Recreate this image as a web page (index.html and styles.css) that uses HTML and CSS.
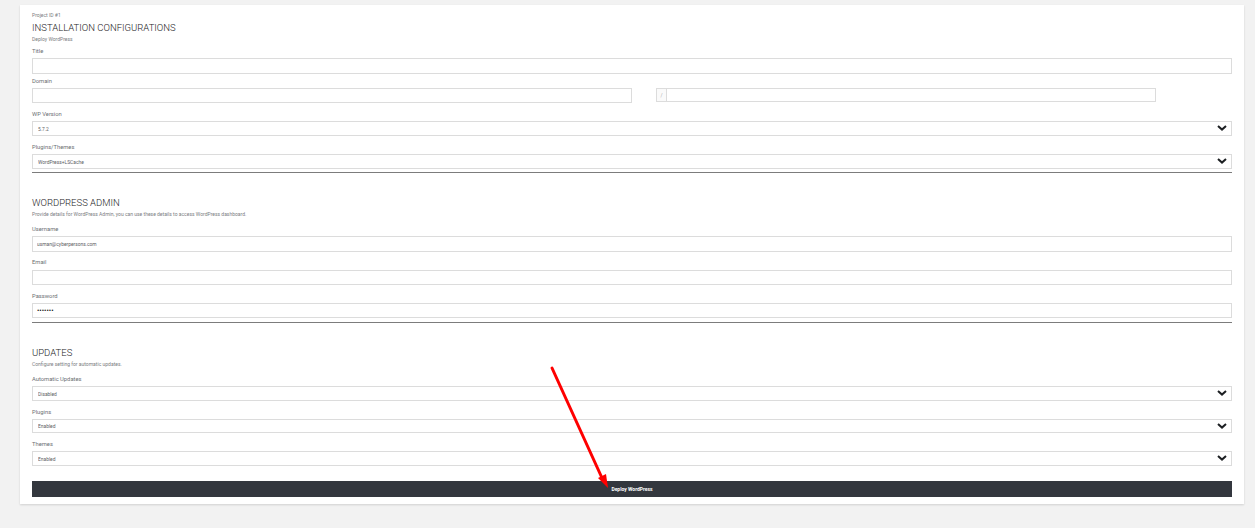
FILE: index.html
```html
<!DOCTYPE html>
<html lang="en">
<head>
<meta charset="utf-8">
<title>Deploy WordPress</title>
<link rel="stylesheet" href="styles.css">
</head>
<body>
<main class="card">
  <section class="section first">
    <p class="small project">Project ID #1</p>
    <h2 class="heading h-install">INSTALLATION CONFIGURATIONS</h2>
    <p class="small sub">Deploy WordPress</p>
    <label class="label l-title">Title</label>
    <input class="field f-title" type="text">
    <label class="label l-domain">Domain</label>
    <div class="domain-row">
      <input class="field f-domain" type="text">
      <div class="path-group">
        <span class="addon">/</span>
        <input class="field f-path" type="text">
      </div>
    </div>
    <label class="label l-select">WP Version</label>
    <div class="select-wrap">
      <select class="field select"><option>5.7.2</option></select>
      <svg class="chev" width="10" height="6" viewBox="0 0 10 6" aria-hidden="true"><path d="M1 1 L5 4.6 L9 1" fill="none" stroke="#1c1f22" stroke-width="2"/></svg>
    </div>
    <label class="label l-select">Plugins/Themes</label>
    <div class="select-wrap">
      <select class="field select"><option>WordPress+LSCache</option></select>
      <svg class="chev" width="10" height="6" viewBox="0 0 10 6" aria-hidden="true"><path d="M1 1 L5 4.6 L9 1" fill="none" stroke="#1c1f22" stroke-width="2"/></svg>
    </div>
    <hr class="rule">
  </section>
  <section class="section">
    <h2 class="heading">WORDPRESS ADMIN</h2>
    <p class="small sub2">Provide details for WordPress Admin, you can use these details to access WordPress dashboard.</p>
    <label class="label l-user">Username</label>
    <input class="field f-user" type="text" value="usman@cyberpersons.com">
    <label class="label l-email">Email</label>
    <input class="field f-email" type="text">
    <label class="label l-pass">Password</label>
    <input class="field f-pass" type="password" value="1234567">
    <hr class="rule rule2">
  </section>
  <section class="section">
    <h2 class="heading">UPDATES</h2>
    <p class="small sub2">Configure setting for automatic updates.</p>
    <label class="label l-user">Automatic Updates</label>
    <div class="select-wrap">
      <select class="field select"><option>Disabled</option></select>
      <svg class="chev" width="10" height="6" viewBox="0 0 10 6" aria-hidden="true"><path d="M1 1 L5 4.6 L9 1" fill="none" stroke="#1c1f22" stroke-width="2"/></svg>
    </div>
    <label class="label l-select">Plugins</label>
    <div class="select-wrap">
      <select class="field select short"><option>Enabled</option></select>
      <svg class="chev" width="10" height="6" viewBox="0 0 10 6" aria-hidden="true"><path d="M1 1 L5 4.6 L9 1" fill="none" stroke="#1c1f22" stroke-width="2"/></svg>
    </div>
    <label class="label l-select">Themes</label>
    <div class="select-wrap">
      <select class="field select"><option>Enabled</option></select>
      <svg class="chev" width="10" height="6" viewBox="0 0 10 6" aria-hidden="true"><path d="M1 1 L5 4.6 L9 1" fill="none" stroke="#1c1f22" stroke-width="2"/></svg>
    </div>
  </section>
  <button class="deploy" type="button">Deploy WordPress</button>
  <svg class="arrow" width="70" height="130" viewBox="0 0 70 130" aria-hidden="true">
    <path d="M2 1 L52 111" stroke="#fe0000" stroke-width="3" stroke-linecap="round" fill="none"/>
    <path d="M58 121 L48 111 L56 107 Z" fill="#fe0000"/>
  </svg>
</main>
</body>
</html>
```
FILE: styles.css
```css
* { box-sizing: border-box; }
html, body { margin: 0; height: 528px; overflow: hidden; }
body {
  background: #f2f2f2;
  padding: 5px 11px 0 20px;
  font-family: Roboto, "Liberation Sans", sans-serif;
  color: #3e4247;
}
.card {
  position: relative;
  background: #fff;
  height: 499px;
  padding: 0 12px;
  box-shadow: 0 1px 2px rgba(0,0,0,.14);
}
.section { display: flex; flex-direction: column; }
.small { margin: 0; font-size: 5px; line-height: 8px; color: #7b7e82; }
.project { margin-top: 6px; }
.heading {
  margin: 0;
  height: 14px;
  font-size: 9.5px;
  line-height: 14px;
  font-weight: 300;
  color: #1d2125;
}
.h-install { margin-top: 2px; }
.section:not(.first) .heading { margin-top: 23px; height: 14px; line-height: 14px; }
.sub { margin-top: 0; }
.sub2 { margin-top: 0; }
.label { font-size: 5.8px; line-height: 8px; color: #6c6f73; display: block; }
.l-title { margin-top: 4px; margin-bottom: 3px; }
.l-domain { margin-top: 3px; margin-bottom: 3px; }
.l-select { margin-top: 7px; margin-bottom: 3px; }
.l-user { margin-top: 7px; margin-bottom: 3px; }
.l-email { margin-top: 6px; margin-bottom: 4px; }
.l-pass { margin-top: 7px; margin-bottom: 3px; }
.field {
  display: block;
  width: 100%;
  height: 16px;
  margin: 0;
  padding: 0 4px;
  border: 1px solid #dcdcdc;
  border-radius: 0;
  background: #fff;
  font-family: inherit;
  font-size: 4.9px;
  color: #5d6064;
  outline: none;
}
.f-domain, .f-email, .f-pass { height: 15px; }
.select-wrap { position: relative; }
.select {
  height: 15px;
  padding: 0 5px;
  appearance: none;
  -webkit-appearance: none;
}
.short { height: 14px; }
.chev { position: absolute; right: 5px; top: 4px; }
.domain-row { display: flex; align-items: flex-start; gap: 24px; }
.f-domain { width: 600px; }
.path-group { display: flex; width: 500px; height: 14px; }
.addon {
  width: 10px;
  height: 14px;
  border: 1px solid #dcdcdc;
  border-right: 0;
  background: #fafafa;
  font-size: 5px;
  line-height: 12px;
  text-align: center;
  color: #aaa;
}
.f-path { flex: 1; height: 14px; }
.f-pass { color: #111; font-size: 7px; }
.rule { width: 100%; margin: 3px 0 0; border: 0; border-top: 1px solid #7c7c7c; height: 1px; }
.rule2 { margin-top: 4px; }
.deploy {
  display: block;
  width: 100%;
  height: 16px;
  margin-top: 15px;
  border: 0;
  padding: 0;
  background: #33373e;
  color: #fff;
  font-family: inherit;
  font-size: 5px;
  font-weight: 700;
}
.arrow { position: absolute; left: 530px; top: 362px; overflow: visible; }
```
